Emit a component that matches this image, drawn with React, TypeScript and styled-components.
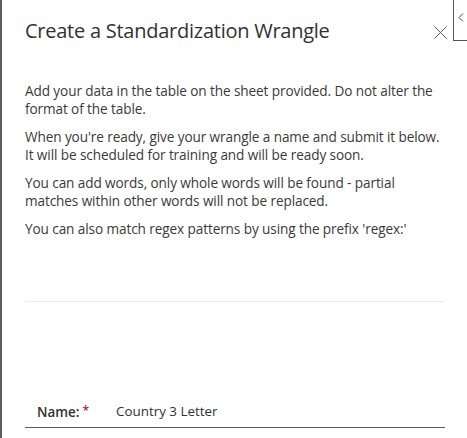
import styled, { createGlobalStyle } from 'styled-components'

const GlobalStyle = createGlobalStyle`
  html, body {
    margin: 0;
    padding: 0;
    background: #ffffff;
  }
  body {
    font-family: "Open Sans", "Noto Sans", "Liberation Sans", sans-serif;
    color: #323130;
  }
`

const Page = styled.div`
  position: relative;
  display: flex;
  width: 467px;
  height: 438px;
  overflow: hidden;
  background: #ffffff;
`

const EdgeRule = styled.div`
  width: 2px;
  flex: none;
  background: #5c5c5c;
`

const Panel = styled.div`
  flex: 1;
  display: flex;
  flex-direction: column;
  padding: 0 22px 0 23px;
`

const Header = styled.div`
  display: flex;
  align-items: center;
  justify-content: space-between;
  padding-top: 17px;
  height: 28px;
`

const Title = styled.h1`
  margin: 0;
  font-size: 20px;
  font-weight: 500;
  line-height: 28px;
  color: #323130;
  letter-spacing: -0.25px;
`

const CloseButton = styled.button`
  border: none;
  background: transparent;
  padding: 0;
  width: 20px;
  height: 20px;
  margin-right: -5px;
  margin-top: 3px;
  display: flex;
  align-items: center;
  justify-content: center;
  cursor: pointer;
`

const Content = styled.div`
  margin-top: 37px;
  display: flex;
  flex-direction: column;
  gap: 10px;
`

const Para = styled.p`
  margin: 0;
  font-size: 13.6px;
  line-height: 18px;
  color: #3b3a39;
  letter-spacing: -0.1px;
`

const Divider = styled.div`
  margin-top: 63px;
  height: 1px;
  background: #edebe9;
`

const Spacer = styled.div`
  flex: 1;
`

const Field = styled.div`
  display: flex;
  align-items: center;
  height: 32px;
  border-bottom: 1px solid #605e5c;
  margin-bottom: 10px;
  font-size: 13.4px;
`

const Label = styled.label`
  padding-left: 12px;
  width: 79px;
  flex: none;
  font-weight: 600;
  color: #323130;
`

const Required = styled.span`
  color: #a4262c;
  margin-left: 3px;
  font-size: 12px;
  vertical-align: 2px;
`

const Value = styled.span`
  color: #323130;
`

const EdgeTab = styled.div`
  position: absolute;
  top: 0;
  right: 0;
  width: 14px;
  height: 41px;
  border-left: 1px solid #555555;
  border-bottom: 1px solid #555555;
  background: #ffffff;
  display: flex;
  justify-content: center;
  padding-top: 13px;
  box-sizing: border-box;
`

export default function App() {
  return (
    <>
      <GlobalStyle />
      <Page>
        <EdgeRule />
        <Panel>
          <Header>
            <Title>Create a Standardization Wrangle</Title>
            <CloseButton aria-label="Close">
              <svg width="13" height="13" viewBox="0 0 13 13">
                <path d="M0.5 0.5 L12.5 12.5 M12.5 0.5 L0.5 12.5" stroke="#605e5c" strokeWidth="1" />
              </svg>
            </CloseButton>
          </Header>
          <Content>
            <Para>
              Add your data in the table on the sheet provided. Do not alter the format of the table.
            </Para>
            <Para>
              When you're ready, give your wrangle a name and submit it below. It will be scheduled for
              training and will be ready soon.
            </Para>
            <Para>
              You can add words, only whole words will be found - partial matches within other words
              will not be replaced.
            </Para>
            <Para>You can also match regex patterns by using the prefix 'regex:'</Para>
          </Content>
          <Divider />
          <Spacer />
          <Field>
            <Label>
              Name:<Required>*</Required>
            </Label>
            <Value>Country 3 Letter</Value>
          </Field>
        </Panel>
        <EdgeTab>
          <svg width="6" height="9" viewBox="0 0 6 9">
            <path d="M5 0.5 L1 4.5 L5 8.5" stroke="#444" strokeWidth="1" fill="none" />
          </svg>
        </EdgeTab>
      </Page>
    </>
  )
}
